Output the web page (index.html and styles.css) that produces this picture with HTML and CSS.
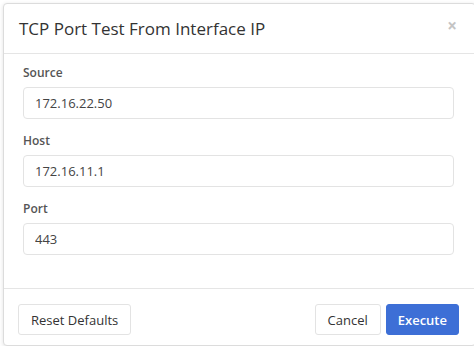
FILE: index.html
```html
<!DOCTYPE html>
<html lang="en">
<head>
    <meta charset="UTF-8">
    <meta name="viewport" content="width=device-width, initial-scale=1.0">
    <title>TCP Port Test</title>
    <link rel="stylesheet" href="styles.css">
</head>
<body>
    <div class="modal">
        <div class="modal-header">
            <h4 class="modal-title">TCP Port Test From Interface IP</h4>
            <span class="close">&times;</span>
        </div>
        <div class="modal-body">
            <div class="form-group">
                <label>Source</label>
                <input type="text" class="form-control" value="172.16.22.50">
            </div>
            <div class="form-group">
                <label>Host</label>
                <input type="text" class="form-control" value="172.16.11.1">
            </div>
            <div class="form-group">
                <label>Port</label>
                <input type="text" class="form-control" value="443">
            </div>
        </div>
        <div class="modal-footer">
            <button class="btn">Reset Defaults</button>
            <div class="right">
                <button class="btn">Cancel</button>
                <button class="btn btn-primary">Execute</button>
            </div>
        </div>
    </div>
</body>
</html>
```

FILE: styles.css
```css
*{ margin: 0; padding: 0; box-sizing: border-box;}
body{ background: #fff; font-family: "Open Sans", "Liberation Sans", sans-serif; color: #333; overflow: hidden;}

.modal{ margin: 3px 0 0 3px; width: 473px; border: 1px solid #dcdcdc; border-radius: 4px; background: #fff; box-shadow: 0 1px 4px rgba(0,0,0,.12);}

.modal-header{ display: flex; align-items: center; justify-content: space-between; height: 50px; padding: 0 15px; border-bottom: 1px solid #e5e5e5;}
.modal-title{ font-size: 17px; font-weight: 400; color: #333;}
.close{ font-size: 17px; font-weight: 700; color: #c4c4c4; line-height: 1; margin: 0 3px 6px 0;}

.modal-body{ padding: 9px 21px 33px 19px;}
.form-group{ margin-bottom: 12px;}
.form-group:last-child{ margin-bottom: 0;}
.form-group label{ display: block; font-size: 12px; font-weight: 600; color: #555; line-height: 19px; margin-bottom: 5px;}
.form-control{ display: block; width: 100%; height: 32px; padding: 0 11px; border: 1px solid #e3e3e3; border-radius: 4px; font-family: inherit; font-size: 13px; color: #444; background: #fff; outline: none;}

.modal-footer{ display: flex; justify-content: space-between; padding: 15px 16px 10px 14px; border-top: 1px solid #e5e5e5;}
.right{ display: flex; gap: 5px;}
.btn{ height: 31px; padding: 0 12px; border: 1px solid #e3e3e3; border-radius: 3px; background: #fff; font-family: inherit; font-size: 13px; color: #333;}
.btn-primary{ background: #3d6fd6; border-color: #3d6fd6; color: #fff; font-weight: 600; padding: 0 11px;}
```
